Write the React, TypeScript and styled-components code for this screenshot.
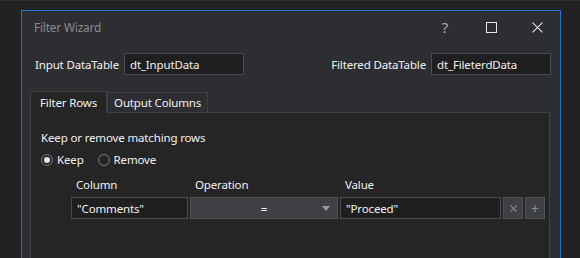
import React from 'react'
import { styled, createGlobalStyle } from 'styled-components'

const GlobalStyle = createGlobalStyle`
  html, body {
    margin: 0;
    padding: 0;
    background: #222224;
    overflow: hidden;
  }
  body {
    font-family: 'Segoe UI', 'Noto Sans', 'Open Sans', sans-serif;
    font-size: 11.5px;
    letter-spacing: -0.15px;
    color: #f1f1f1;
    border-top: 1px solid #2f2f32;
  }
`

const Page = styled.div`
  padding: 9px 0 0 21px;
  height: 257px;
  box-sizing: border-box;
  overflow: hidden;
`

const Dialog = styled.div`
  width: 540px;
  height: 270px;
  box-sizing: border-box;
  border: 1px solid #1f6fd8;
  background: #2d2e32;
  display: flex;
  flex-direction: column;
`

const TitleBar = styled.div`
  height: 32px;
  display: flex;
  align-items: center;
  padding-left: 12px;
`

const Title = styled.div`
  flex: 1;
  color: #8b8b8e;
  font-size: 11.8px;
`

const WinButton = styled.div`
  width: 46px;
  height: 32px;
  display: flex;
  align-items: center;
  justify-content: center;
  color: #a8a8aa;
`

const DataRow = styled.div`
  display: flex;
  align-items: center;
  margin-top: 10px;
  padding: 0 9px 0 13px;
  justify-content: space-between;
`

const Field = styled.div`
  display: flex;
  align-items: center;
  gap: 5px;
`

const TextBox = styled.div<{ $width: number }>`
  width: ${(p) => p.$width}px;
  height: 22px;
  box-sizing: border-box;
  border: 1px solid #4a4b50;
  background: #1f1f1f;
  display: flex;
  align-items: center;
  padding-left: 5px;
  color: #f1f1f1;
`

const Tabs = styled.div`
  margin: 15px 10px 0 8px;
  display: flex;
  flex-direction: column;
  flex: 1;
`

const TabStrip = styled.div`
  display: flex;
  align-items: flex-end;
  height: 22px;
`

const Tab = styled.div<{ $active?: boolean }>`
  box-sizing: border-box;
  height: ${(p) => (p.$active ? 22 : 20)}px;
  padding: 0 ${(p) => (p.$active ? 9 : 6)}px;
  display: flex;
  align-items: center;
  border: 1px solid #3f3f44;
  border-bottom: none;
  background: ${(p) => (p.$active ? '#252526' : '#2d2e32')};
  margin-bottom: ${(p) => (p.$active ? -1 : 0)}px;
  position: relative;
  z-index: ${(p) => (p.$active ? 1 : 0)};
`

const Panel = styled.div`
  flex: 1;
  border: 1px solid #3f3f44;
  background: #252526;
  padding: 17px 10px 0 10px;
`

const Caption = styled.div`
  line-height: 16px;
`

const RadioRow = styled.div`
  display: flex;
  align-items: center;
  gap: 14px;
  margin-top: 6px;
  line-height: 16px;
`

const RadioOption = styled.div`
  display: flex;
  align-items: center;
  gap: 4px;
`

const RadioCircle = styled.span<{ $checked?: boolean }>`
  width: 12px;
  height: 12px;
  box-sizing: border-box;
  border-radius: 50%;
  border: 1px solid #7a7a7e;
  display: flex;
  align-items: center;
  justify-content: center;
  &::after {
    content: '';
    width: 6px;
    height: 6px;
    border-radius: 50%;
    background: ${(p) => (p.$checked ? '#e8e8e8' : 'transparent')};
  }
`

const Grid = styled.div`
  margin: 9px 0 0 30px;
  display: grid;
  grid-template-columns: 117px 148px 161px 20px 20px;
  column-gap: 2px;
  row-gap: 4px;
  align-items: center;
`

const HeadCell = styled.div`
  padding-left: 5px;
  line-height: 16px;
`

const Select = styled.div`
  height: 22px;
  box-sizing: border-box;
  border: 1px solid #505156;
  background: #3f4044;
  display: flex;
  align-items: center;
  justify-content: center;
  position: relative;
  &::after {
    content: '';
    position: absolute;
    right: 7px;
    top: 8px;
    border-left: 4px solid transparent;
    border-right: 4px solid transparent;
    border-top: 5px solid #9a9a9e;
  }
`

const IconButton = styled.div`
  height: 22px;
  box-sizing: border-box;
  border: 1px solid #505156;
  background: #3f4044;
  display: flex;
  align-items: center;
  justify-content: center;
  color: #8a8a8e;
`

const Cross = ({ size, w }: { size: number; w: number }) => (
  <svg width={size} height={size} viewBox="0 0 10 10">
    <path d="M0.5 0.5 L9.5 9.5 M9.5 0.5 L0.5 9.5" stroke="currentColor" strokeWidth={w} />
  </svg>
)

export default function App() {
  return (
    <>
      <GlobalStyle />
      <Page>
        <Dialog>
          <TitleBar>
            <Title>Filter Wizard</Title>
            <WinButton style={{ fontSize: 15 }}>?</WinButton>
            <WinButton>
              <svg width="11" height="11" viewBox="0 0 11 11">
                <rect x="0.5" y="0.5" width="10" height="10" fill="none" stroke="#e6e6e6" />
              </svg>
            </WinButton>
            <WinButton style={{ color: '#e6e6e6' }}>
              <Cross size={11} w={1} />
            </WinButton>
          </TitleBar>
          <DataRow>
            <Field>
              <span>Input DataTable</span>
              <TextBox $width={120}>dt_InputData</TextBox>
            </Field>
            <Field>
              <span>Filtered DataTable</span>
              <TextBox $width={120}>dt_FileterdData</TextBox>
            </Field>
          </DataRow>
          <Tabs>
            <TabStrip>
              <Tab $active>Filter Rows</Tab>
              <Tab>Output Columns</Tab>
            </TabStrip>
            <Panel>
              <Caption>Keep or remove matching rows</Caption>
              <RadioRow>
                <RadioOption>
                  <RadioCircle $checked />
                  Keep
                </RadioOption>
                <RadioOption>
                  <RadioCircle />
                  Remove
                </RadioOption>
              </RadioRow>
              <Grid>
                <HeadCell>Column</HeadCell>
                <HeadCell>Operation</HeadCell>
                <HeadCell>Value</HeadCell>
                <span />
                <span />
                <TextBox $width={117}>"Comments"</TextBox>
                <Select>=</Select>
                <TextBox $width={161}>"Proceed"</TextBox>
                <IconButton>
                  <Cross size={7} w={1.6} />
                </IconButton>
                <IconButton style={{ fontSize: 14 }}>+</IconButton>
              </Grid>
            </Panel>
          </Tabs>
        </Dialog>
      </Page>
    </>
  )
}
